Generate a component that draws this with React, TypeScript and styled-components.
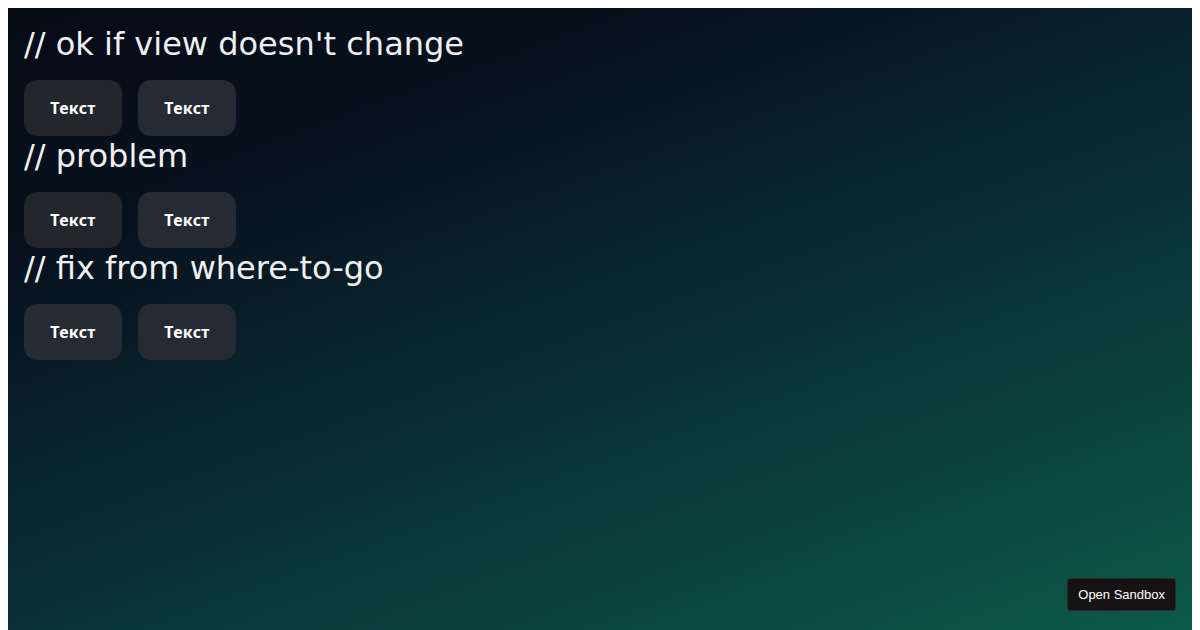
import React from "react";
import styled, { createGlobalStyle } from "styled-components";

const Global = createGlobalStyle`
  body {
    margin: 8px;
    background: #ffffff;
  }
  * { box-sizing: border-box; }
`;

const Page = styled.main`
  min-height: 100vh;
  padding: 16px;
  background: linear-gradient(160deg, #070b16 0%, #07121e 25%, #0a3336 60%, #0d5a4b 100%);
  font-family: "DejaVu Sans", "Noto Sans", sans-serif;
  color: #f3f4f6;
`;

const Heading = styled.h2`
  margin: 0 0 16px;
  font-size: 32px;
  line-height: 40px;
  font-weight: 400;
  color: #eef0f4;
`;

const Row = styled.div`
  display: flex;
  gap: 16px;
`;

const Btn = styled.button<{ $dither?: boolean }>`
  width: 98px;
  height: 56px;
  padding: 0;
  border: none;
  border-radius: 13px;
  background: ${(p) => (p.$dither ? "#23262d" : "#262a32")};
  color: #ffffff;
  font-family: "Noto Sans", "Open Sans", sans-serif;
  font-size: 16px;
  font-weight: 700;
  letter-spacing: 0.3px;
  line-height: 20px;
  cursor: pointer;
`;

const SandboxButton = styled.a`
  position: fixed;
  right: 24px;
  bottom: 19px;
  height: 33px;
  padding: 0 10px;
  display: flex;
  align-items: center;
  background: #151314;
  border: 1px solid #2a2a2a;
  border-radius: 3px;
  color: #ffffff;
  font-family: "Liberation Sans", Arial, sans-serif;
  font-size: 13px;
  text-decoration: none;
`;

const sections = [
  { title: "// ok if view doesn't change", dither: true },
  { title: "// problem", dither: true },
  { title: "// fix from where-to-go", dither: false },
];

export default function App() {
  return (
    <>
      <Global />
      <Page>
        {sections.map((s) => (
          <section key={s.title}>
            <Heading>{s.title}</Heading>
            <Row>
              <Btn $dither={s.dither}>Текст</Btn>
              <Btn>Текст</Btn>
            </Row>
          </section>
        ))}
      </Page>
      <SandboxButton href="#">Open Sandbox</SandboxButton>
    </>
  );
}
